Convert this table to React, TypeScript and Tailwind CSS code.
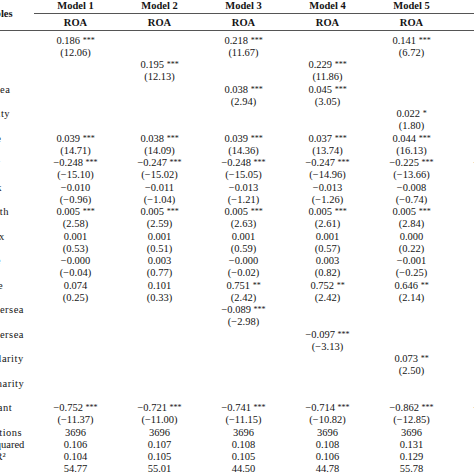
import React from "react";

type Coef = { v: string; s?: string };

const c = (v: string, s?: string): Coef => ({ v, s });

type VarRow = { label: string; coefs: (Coef | null)[]; ts: (string | null)[] };

const vars: VarRow[] = [
  { label: "FO", coefs: [c("0.186", "***"), null, c("0.218", "***"), null, c("0.141", "***"), c("0.153", "***")], ts: ["(12.06)", null, "(11.67)", null, "(6.72)", "(7.21)"] },
  { label: "SO", coefs: [null, c("0.195", "***"), null, c("0.229", "***"), null, null], ts: [null, "(12.13)", null, "(11.86)", null, null] },
  { label: "Oversea", coefs: [null, null, c("0.038", "***"), c("0.045", "***"), null, null], ts: [null, null, "(2.94)", "(3.05)", null, null] },
  { label: "Polarity", coefs: [null, null, null, null, c("0.022", "*"), c("0.025", "**")], ts: [null, null, null, null, "(1.80)", "(2.03)"] },
  { label: "Size", coefs: [c("0.039", "***"), c("0.038", "***"), c("0.039", "***"), c("0.037", "***"), c("0.044", "***"), c("0.043", "***")], ts: ["(14.71)", "(14.09)", "(14.36)", "(13.74)", "(16.13)", "(15.98)"] },
  { label: "Lev", coefs: [c("\u22120.248", "***"), c("\u22120.247", "***"), c("\u22120.248", "***"), c("\u22120.247", "***"), c("\u22120.225", "***"), c("\u22120.226", "***")], ts: ["(\u221215.10)", "(\u221215.02)", "(\u221215.05)", "(\u221214.96)", "(\u221213.66)", "(\u221213.71)"] },
  { label: "Risk", coefs: [c("\u22120.010"), c("\u22120.011"), c("\u22120.013"), c("\u22120.013"), c("\u22120.008"), c("\u22120.009")], ts: ["(\u22120.96)", "(\u22121.04)", "(\u22121.21)", "(\u22121.26)", "(\u22120.74)", "(\u22120.80)"] },
  { label: "Growth", coefs: [c("0.005", "***"), c("0.005", "***"), c("0.005", "***"), c("0.005", "***"), c("0.005", "***"), c("0.005", "***")], ts: ["(2.58)", "(2.59)", "(2.63)", "(2.61)", "(2.84)", "(2.82)"] },
  { label: "Index", coefs: [c("0.001"), c("0.001"), c("0.001"), c("0.001"), c("0.000"), c("0.000")], ts: ["(0.53)", "(0.51)", "(0.59)", "(0.57)", "(0.22)", "(0.24)"] },
  { label: "Age", coefs: [c("\u22120.000"), c("0.003"), c("\u22120.000"), c("0.003"), c("\u22120.001"), c("\u22120.001")], ts: ["(\u22120.04)", "(0.77)", "(\u22120.02)", "(0.82)", "(\u22120.25)", "(\u22120.28)"] },
  { label: "State", coefs: [c("0.074"), c("0.101"), c("0.751", "**"), c("0.752", "**"), c("0.646", "**"), c("0.668", "**")], ts: ["(0.25)", "(0.33)", "(2.42)", "(2.42)", "(2.14)", "(2.21)"] },
  { label: "FO \u00d7 Oversea", coefs: [null, null, c("\u22120.089", "***"), null, null, null], ts: [null, null, "(\u22122.98)", null, null, null] },
  { label: "SO \u00d7 Oversea", coefs: [null, null, null, c("\u22120.097", "***"), null, null], ts: [null, null, null, "(\u22123.13)", null, null] },
  { label: "FO \u00d7 Polarity", coefs: [null, null, null, null, c("0.073", "**"), null], ts: [null, null, null, null, "(2.50)", null] },
  { label: "SO \u00d7 Binarity", coefs: [null, null, null, null, null, c("0.062", "**")], ts: [null, null, null, null, null, "(2.14)"] },
  { label: "Constant", coefs: [c("\u22120.752", "***"), c("\u22120.721", "***"), c("\u22120.741", "***"), c("\u22120.714", "***"), c("\u22120.862", "***"), c("\u22120.869", "***")], ts: ["(\u221211.37)", "(\u221211.00)", "(\u221211.15)", "(\u221210.82)", "(\u221212.85)", "(\u221212.93)"] },
];

const stats: { label: string; tight?: boolean; vals: string[] }[] = [
  { label: "Observations", vals: ["3696", "3696", "3696", "3696", "3696", "3696"] },
  { label: "OLS R-squared", tight: true, vals: ["0.106", "0.107", "0.108", "0.108", "0.131", "0.130"] },
  { label: "Adj R\u00b2", tight: true, vals: ["0.104", "0.105", "0.105", "0.106", "0.129", "0.128"] },
  { label: "F", vals: ["54.77", "55.01", "44.50", "44.78", "55.78", "55.12"] },
];

const models = [1, 2, 3, 4, 5, 6];

function CoefText({ co }: { co: Coef | null }) {
  if (!co) return null;
  return (
    <>
      {co.v}
      {co.s ? (
        <>
          {" "}
          <span className="relative -top-px text-[8px]">{co.s}</span>
        </>
      ) : null}
    </>
  );
}

function Row({ label, tight, children }: { label?: string; tight?: boolean; children: React.ReactNode }) {
  return (
    <div className="grid h-[12.25px] grid-cols-[repeat(7,84px)] leading-[12.25px]">
      <div className={tight ? "whitespace-nowrap text-center" : "whitespace-nowrap text-center tracking-[0.5px]"}>
        {label ?? ""}
      </div>
      {children}
    </div>
  );
}

export default function App() {
  return (
    <div className="h-[474px] w-[474px] overflow-hidden bg-white text-[#141414]">
      <div className="ml-[-50.5px] mt-[-2px] w-[588px] font-['Liberation_Serif',serif] text-[10.5px]">
        <div className="grid grid-cols-[repeat(7,84px)]">
          <div className="row-span-2 flex items-center justify-center font-bold">Variables</div>
          {models.map((m) => (
            <div key={"m" + m} className="h-[16px] border-b border-[#555] text-center font-bold leading-[15px]">
              Model {m}
            </div>
          ))}
          {models.map((m) => (
            <div key={"r" + m} className="h-[16px] pt-[2px] text-center font-bold leading-[14px]">
              ROA
            </div>
          ))}
        </div>
        <div className="h-px bg-[#555]" />
        <div className="pt-[3.7px]">
          {vars.map((vr) => (
            <React.Fragment key={vr.label}>
              <Row label={vr.label}>
                {vr.coefs.map((co, i) => (
                  <div key={i} className="whitespace-nowrap text-center">
                    <CoefText co={co} />
                  </div>
                ))}
              </Row>
              <Row>
                {vr.ts.map((t, i) => (
                  <div key={i} className="whitespace-nowrap text-center">
                    {t ?? ""}
                  </div>
                ))}
              </Row>
            </React.Fragment>
          ))}
          {stats.map((s) => (
            <Row key={s.label} label={s.label} tight={s.tight}>
              {s.vals.map((v, i) => (
                <div key={i} className="whitespace-nowrap text-center">
                  {v}
                </div>
              ))}
            </Row>
          ))}
        </div>
      </div>
    </div>
  );
}
